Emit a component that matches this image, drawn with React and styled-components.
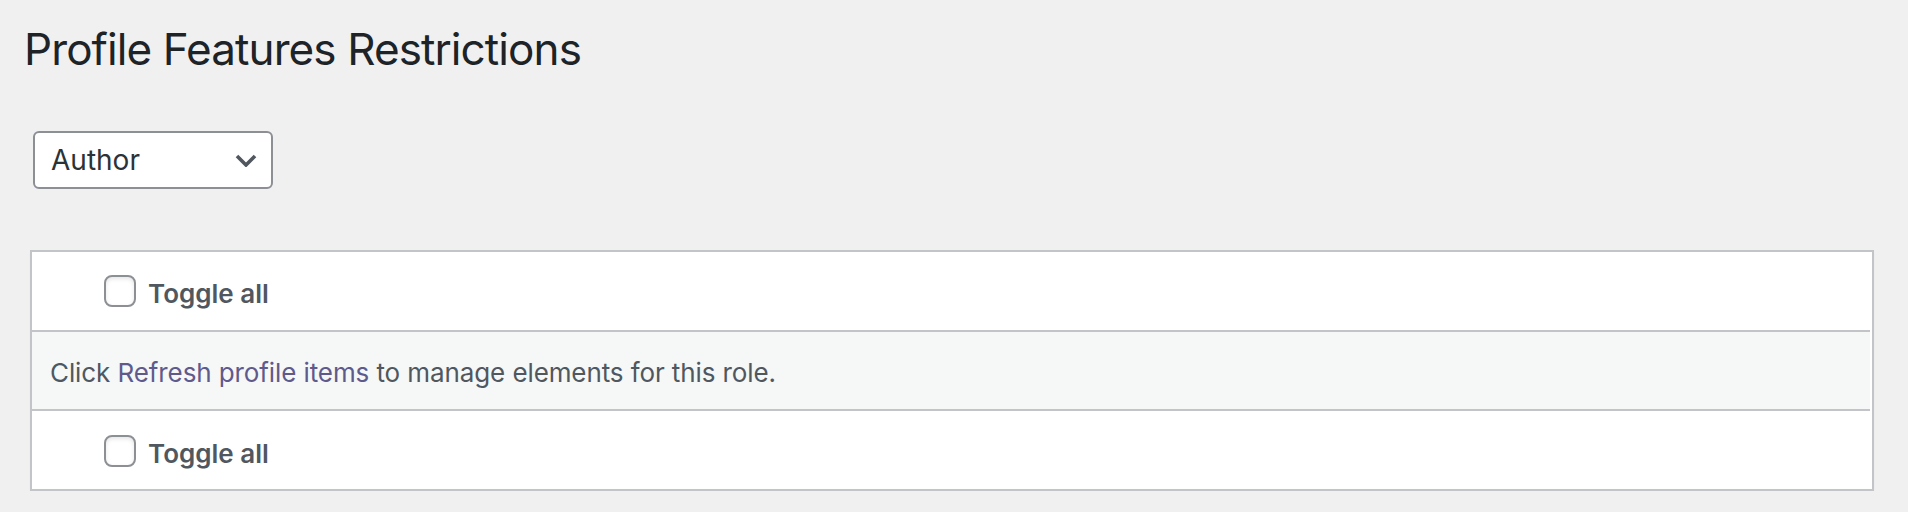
import React from "react";
import styled, { createGlobalStyle } from "styled-components";

const Global = createGlobalStyle`
  html, body { margin: 0; padding: 0; }
  body {
    background: #f0f0f1;
    font-family: Inter, "Noto Sans", "Liberation Sans", sans-serif;
    color: #3c434a;
  }
`;

const Wrap = styled.div`
  padding: 19px 34px 0 24px;
`;

const Heading = styled.h1`
  margin: 0;
  font-size: 44px;
  line-height: 60px;
  font-weight: 400;
  color: #1d2327;
  letter-spacing: -0.9px;
`;

const SelectWrap = styled.div`
  position: relative;
  width: 240px;
  margin: 52px 0 0 9px;
`;

const Select = styled.select`
  appearance: none;
  -webkit-appearance: none;
  display: block;
  width: 240px;
  height: 58px;
  box-sizing: border-box;
  padding: 0 48px 0 16px;
  border: 2px solid #8c8f94;
  border-radius: 6px;
  background: #fff;
  font-family: inherit;
  font-size: 28px;
  color: #2c3338;
  outline: none;
`;

const Chevron = styled.svg`
  position: absolute;
  right: 16px;
  top: 23px;
  width: 22px;
  height: 13px;
  pointer-events: none;
`;

const Table = styled.div`
  margin: 61px 0 0 6px;
  background: #fff;
  border: 2px solid #c3c4c7;
  padding-right: 2px;
  box-shadow: 0 2px 2px rgba(0, 0, 0, 0.04);
`;

const ToggleRow = styled.label`
  display: flex;
  align-items: center;
  height: 80px;
  box-sizing: border-box;
  padding: ${(p) => (p.$bottom ? "2px 0 0 72px" : "0 0 0 72px")};
  gap: 12px;
  border-bottom: ${(p) => (p.$top ? "2px solid #c3c4c7" : "none")};
  border-top: ${(p) => (p.$bottom ? "2px solid #c3c4c7" : "none")};
  cursor: pointer;
`;

const Checkbox = styled.input.attrs({ type: "checkbox" })`
  appearance: none;
  -webkit-appearance: none;
  margin: 0;
  width: 32px;
  height: 32px;
  box-sizing: border-box;
  border: 2px solid #8c8f94;
  border-radius: 8px;
  background: #fff;
  box-shadow: inset 0 2px 4px rgba(0, 0, 0, 0.1);
  flex: none;
`;

const ToggleText = styled.span`
  font-size: 26px;
  font-weight: 600;
  color: #50575e;
  margin-top: 5px;
`;

const InfoRow = styled.div`
  display: flex;
  align-items: center;
  height: 77px;
  padding: 4px 18px 0;
  box-sizing: border-box;
  background: #f6f7f7;
  font-size: 26px;
  letter-spacing: -0.1px;
  color: #50575e;
`;

const Link = styled.a`
  color: #5f5a8c;
  text-decoration: none;
  margin: 0 0.28em;
`;

export default function App() {
  return (
    <>
      <Global />
      <Wrap>
        <Heading>Profile Features Restrictions</Heading>
        <SelectWrap>
          <Select defaultValue="author">
            <option value="administrator">Administrator</option>
            <option value="editor">Editor</option>
            <option value="author">Author</option>
            <option value="contributor">Contributor</option>
            <option value="subscriber">Subscriber</option>
          </Select>
          <Chevron viewBox="0 0 22 13" fill="none">
            <path d="M2 2 L11 11 L20 2" stroke="#50575e" strokeWidth="3.6" strokeLinecap="butt" strokeLinejoin="miter" />
          </Chevron>
        </SelectWrap>
        <Table>
          <ToggleRow $top>
            <Checkbox />
            <ToggleText>Toggle all</ToggleText>
          </ToggleRow>
          <InfoRow>
            Click<Link href="#">Refresh profile items</Link>to manage elements for this role.
          </InfoRow>
          <ToggleRow $bottom>
            <Checkbox />
            <ToggleText>Toggle all</ToggleText>
          </ToggleRow>
        </Table>
      </Wrap>
    </>
  );
}
